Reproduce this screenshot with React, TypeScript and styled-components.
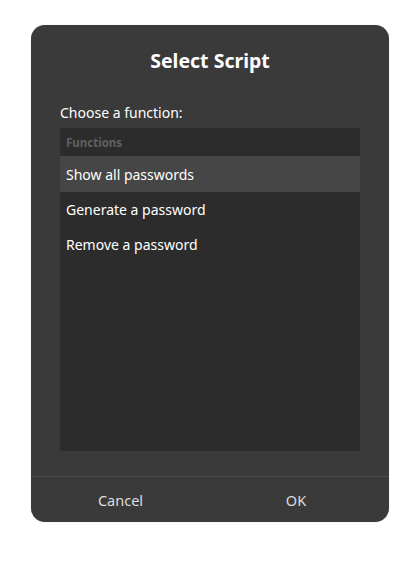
import React, { useState } from 'react';
import styled, { createGlobalStyle } from 'styled-components';

const GlobalStyle = createGlobalStyle`
  html, body {
    margin: 0;
    padding: 0;
    background: #ffffff;
  }
  body {
    font-family: "Noto Sans", "Open Sans", "DejaVu Sans", sans-serif;
  }
`;

const Page = styled.div`
  width: 420px;
  height: 565px;
  padding: 25px 31px 0;
  box-sizing: border-box;
`;

const Dialog = styled.div`
  width: 358px;
  height: 497px;
  background: #3a3a3a;
  border-radius: 14px;
  display: flex;
  flex-direction: column;
  overflow: hidden;
  box-shadow: 0 0 1px rgba(0, 0, 0, 0.25);
`;

const Title = styled.h1`
  margin: 0;
  padding-top: 22px;
  height: 50px;
  box-sizing: border-box;
  text-align: center;
  color: #ffffff;
  font-size: 19.5px;
  font-weight: 700;
  line-height: 28px;
`;

const Body = styled.div`
  flex: 1;
  display: flex;
  flex-direction: column;
  padding: 28px 29px 25px;
`;

const Label = styled.div`
  color: #ffffff;
  font-size: 14px;
  line-height: 20px;
  height: 25px;
`;

const List = styled.div`
  flex: 1;
  background: #2c2c2c;
  display: flex;
  flex-direction: column;
`;

const Header = styled.div`
  height: 28px;
  display: flex;
  align-items: center;
  padding: 0 6px;
  color: #606060;
  font-size: 11.5px;
  font-weight: 700;
`;

const Row = styled.div<{ $selected?: boolean }>`
  height: 35px;
  display: flex;
  align-items: center;
  padding: 0 6px;
  color: #ffffff;
  font-size: 14px;
  background: ${(p) => (p.$selected ? '#464646' : 'transparent')};
  &:nth-child(2) {
    height: 36px;
  }
`;

const Footer = styled.div`
  height: 46px;
  box-sizing: border-box;
  border-top: 1px solid #4c4c4c;
  display: grid;
  grid-template-columns: 1fr 1fr;
`;

const Button = styled.button<{ $shift?: number }>`
  border: none;
  background: transparent;
  color: #dddddd;
  font-family: inherit;
  font-size: 14.5px;
  padding: 0 ${(p) => p.$shift ?? 0}px 0 0;
  cursor: pointer;
`;

const functions = ['Show all passwords', 'Generate a password', 'Remove a password'];

export default function App() {
  const [selected, setSelected] = useState(0);
  return (
    <>
      <GlobalStyle />
      <Page>
        <Dialog>
          <Title>Select Script</Title>
          <Body>
            <Label>Choose a function:</Label>
            <List>
              <Header>Functions</Header>
              {functions.map((f, i) => (
                <Row key={f} $selected={i === selected} onClick={() => setSelected(i)}>
                  {f}
                </Row>
              ))}
            </List>
          </Body>
          <Footer>
            <Button>Cancel</Button>
            <Button $shift={7}>OK</Button>
          </Footer>
        </Dialog>
      </Page>
    </>
  );
}
